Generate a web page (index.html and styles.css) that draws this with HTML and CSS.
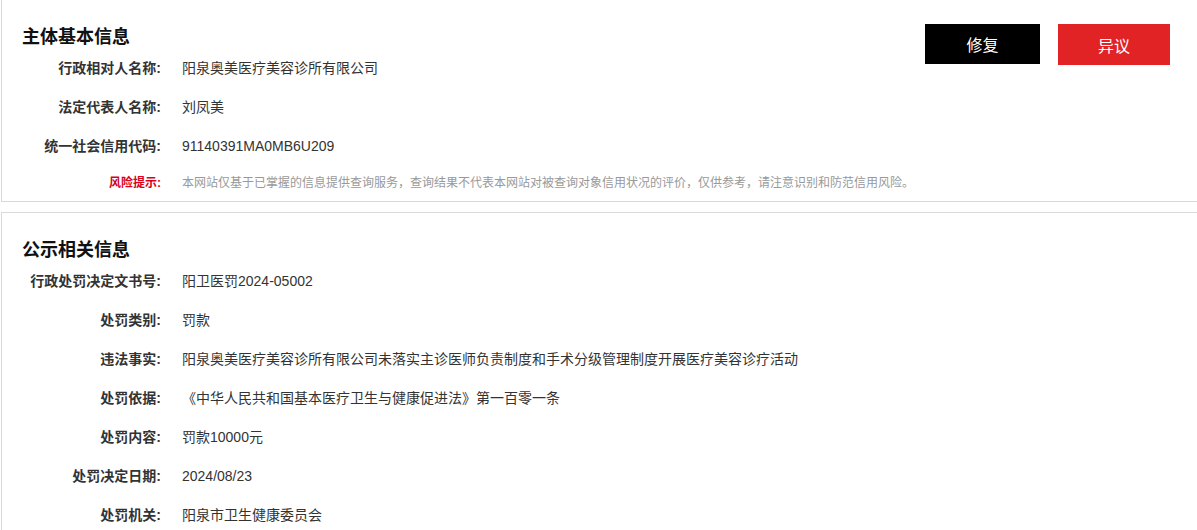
FILE: index.html
```html
<!DOCTYPE html>
<html lang="zh-CN">
<head>
<meta charset="utf-8">
<title>信用信息</title>
<link rel="stylesheet" href="styles.css">
</head>
<body>
<div class="page">
  <section class="card card--first">
    <div class="card-main">
      <h2 class="card-title">主体基本信息</h2>
      <div class="row"><span class="label">行政相对人名称:</span><span class="value">阳泉奥美医疗美容诊所有限公司</span></div>
      <div class="row"><span class="label">法定代表人名称:</span><span class="value">刘凤美</span></div>
      <div class="row"><span class="label">统一社会信用代码:</span><span class="value">91140391MA0MB6U209</span></div>
      <div class="row row--risk"><span class="label label--risk">风险提示:</span><span class="value value--risk">本网站仅基于已掌握的信息提供查询服务，查询结果不代表本网站对被查询对象信用状况的评价，仅供参考，请注意识别和防范信用风险。</span></div>
    </div>
    <div class="actions">
      <button class="btn btn--dark">修复</button>
      <button class="btn btn--red">异议</button>
    </div>
  </section>
  <section class="card">
    <div class="card-main">
      <h2 class="card-title">公示相关信息</h2>
      <div class="row"><span class="label">行政处罚决定文书号:</span><span class="value">阳卫医罚2024-05002</span></div>
      <div class="row"><span class="label">处罚类别:</span><span class="value">罚款</span></div>
      <div class="row"><span class="label">违法事实:</span><span class="value">阳泉奥美医疗美容诊所有限公司未落实主诊医师负责制度和手术分级管理制度开展医疗美容诊疗活动</span></div>
      <div class="row"><span class="label">处罚依据:</span><span class="value">《中华人民共和国基本医疗卫生与健康促进法》第一百零一条</span></div>
      <div class="row"><span class="label">处罚内容:</span><span class="value">罚款10000元</span></div>
      <div class="row"><span class="label">处罚决定日期:</span><span class="value">2024/08/23</span></div>
      <div class="row"><span class="label">处罚机关:</span><span class="value">阳泉市卫生健康委员会</span></div>
    </div>
  </section>
</div>
</body>
</html>
```
FILE: styles.css
```css
html, body {
  margin: 0;
  padding: 0;
  background: #fff;
}
body {
  font-family: "Liberation Sans", "Noto Sans CJK SC", sans-serif;
  color: #333;
  overflow: hidden;
}
.page {
  margin-top: -1px;
  padding-left: 1px;
  display: flex;
  flex-direction: column;
  gap: 10px;
}
.card {
  border: 1px solid #d9d9d9;
  border-right: none;
  padding-top: 25px;
  display: flex;
  align-items: flex-start;
}
.card-main {
  flex: 1;
}
.card-title {
  margin: 0;
  padding-left: 20px;
  font-size: 18px;
  line-height: 24px;
  font-weight: bold;
  color: #111;
}
.row {
  display: flex;
  height: 39px;
  line-height: 39px;
  font-size: 14px;
}
.label {
  width: 159px;
  flex: none;
  text-align: right;
  font-weight: bold;
  color: #333;
}
.value {
  margin-left: 21px;
  color: #333;
  white-space: nowrap;
}
.row--risk {
  height: 35px;
  line-height: 35px;
  font-size: 12px;
}
.label--risk {
  color: #d9001b;
}
.value--risk {
  color: #999;
}
.actions {
  display: flex;
  gap: 18px;
  margin-top: -1px;
  margin-right: 27px;
}
.btn {
  border: none;
  width: 114px;
  height: 40px;
  font-family: "Liberation Sans", "Noto Sans CJK SC", sans-serif;
  font-size: 16px;
  color: #fff;
  cursor: pointer;
  padding: 0;
}
.btn--dark {
  background: #000;
  width: 115px;
}
.btn--red {
  background: #e12326;
  width: 112px;
  height: 41px;
}
```
